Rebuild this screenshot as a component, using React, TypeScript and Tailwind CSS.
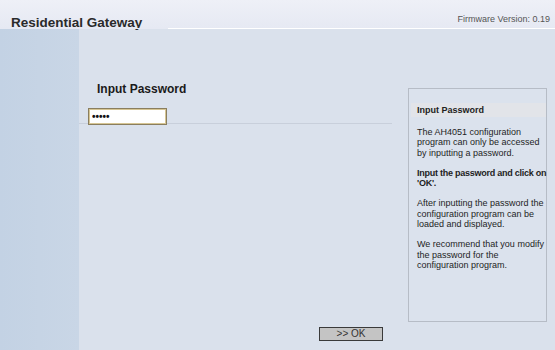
import React from "react";

export default function App() {
  return (
    <div className="w-[555px] h-[350px] overflow-hidden flex flex-col bg-[#dae1ec] text-[#1e1e1e] font-['Liberation_Sans',Arial,sans-serif]">
      {/* Header */}
      <div className="h-[28px] flex items-start justify-between bg-gradient-to-b from-[#eef0f7] to-[#e6e9f3]">
        <div className="ml-[11px] mt-[16px] text-[13.5px] leading-[13px] font-bold text-[#2a2a2a]">
          Residential Gateway
        </div>
        <div className="mr-[5px] mt-[15px] text-[9px] leading-[9px] text-[#555]">
          Firmware Version: 0.19
        </div>
      </div>
      <div className="h-[1px] flex">
        <div className="w-[168px] bg-[#e6e9f3]" />
        <div className="flex-1 bg-white" />
      </div>

      {/* Body */}
      <div className="flex-1 flex">
        <div className="w-[79px] bg-gradient-to-r from-[#c3d2e4] to-[#c9d6e6]" />
        <div className="flex-1 flex">
          {/* Left column */}
          <div className="w-[313px] flex flex-col">
            <h1 className="ml-[18px] mt-[53px] text-[12px] leading-[14px] font-bold text-[#1a1a1a]">
              Input Password
            </h1>
            <div className="mt-[12px] h-[16px] border-b border-[#c8cfdb] pl-[9px]">
              <input
                type="password"
                readOnly
                defaultValue="12345"
                className="block h-[17px] w-[79px] bg-white border border-[#8a7e5f] shadow-[inset_0_0_0_1px_#d6c593] px-[3px] text-[10px] font-bold text-[#111] outline-none"
              />
            </div>
            <button className="ml-[240px] mt-[203px] w-[64px] h-[14px] bg-[#c4c4c4] border border-[#3a3a3a] text-[10px] leading-[12px] text-[#333] flex items-center justify-center">
              &gt;&gt; OK
            </button>
          </div>

          {/* Right info panel */}
          <div className="ml-[16px] mt-[59px] w-[139px] h-[234px] border border-[#b6bcc6] bg-[#dbe2ed] pt-[14px]">
            <div className="ml-[2px] h-[14px] bg-[#e2e4e9] pl-[6px] text-[9px] leading-[14px] font-bold text-[#222]">
              Input Password
            </div>
            <div className="pl-[8px] text-[9px] leading-[10.5px] text-[#1e1e1e] whitespace-nowrap">
              <p className="mt-[9.5px]">
                The AH4051 configuration
                <br />
                program can only be accessed
                <br />
                by inputting a password.
              </p>
              <p className="mt-[9.5px] font-bold tracking-[-0.25px]">
                Input the password and click on
                <br />
                'OK'.
              </p>
              <p className="mt-[9.5px]">
                After inputting the password the
                <br />
                configuration program can be
                <br />
                loaded and displayed.
              </p>
              <p className="mt-[9.5px]">
                We recommend that you modify
                <br />
                the password for the
                <br />
                configuration program.
              </p>
            </div>
          </div>
        </div>
      </div>
    </div>
  );
}
